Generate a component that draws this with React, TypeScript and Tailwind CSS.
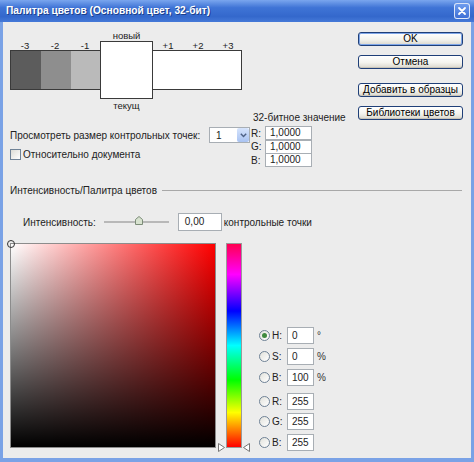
import React from 'react'

const font = "font-['Liberation_Sans','Arial',sans-serif]"

function XpButton({ label, primary = false, className = '' }: { label: string; primary?: boolean; className?: string }) {
  return (
    <div
      className={`flex h-[14px] w-[105px] items-center justify-center whitespace-nowrap rounded-[3px] border border-[#1f3f78] bg-[linear-gradient(to_bottom,#ffffff,#f3f3ee_55%,#d9d6cc)] text-[10px] leading-none text-black ${
        primary ? 'shadow-[inset_0_0_0_1px_#7ea6e8]' : 'shadow-[inset_0_-1px_0_#c8c4b8]'
      } ${className}`}
    >
      {label}
    </div>
  )
}

function Radio({ checked = false }: { checked?: boolean }) {
  return (
    <div className="flex h-[11px] w-[11px] items-center justify-center rounded-full border border-[#6f8296] bg-[linear-gradient(135deg,#e2e2dc,#ffffff)]">
      {checked && <div className="h-[5px] w-[5px] rounded-full bg-[#3f8a3f]" />}
    </div>
  )
}

function Field({ value, className = '' }: { value: string; className?: string }) {
  return (
    <div className={`flex items-center border border-[#a8aeb4] bg-white pl-[4px] text-[10px] leading-none text-[#222] ${className}`}>
      {value}
    </div>
  )
}

function ValueRow({ label, value, unit, checked, className = '' }: { label: string; value: string; unit?: string; checked?: boolean; className?: string }) {
  return (
    <div className={`flex h-[17px] items-center ${className}`}>
      <Radio checked={checked} />
      <span className="ml-[2px] w-[15px] text-[10px] text-[#222]">{label}</span>
      <Field value={value} className="h-[17px] w-[27px]" />
      {unit && <span className="ml-[3px] text-[10px] text-[#333]">{unit}</span>}
    </div>
  )
}

export default function App() {
  return (
    <div className={`flex h-[462px] w-[474px] flex-col bg-[#7aa2e6] ${font}`}>
      {/* title bar */}
      <div className="flex h-[22px] items-center bg-[linear-gradient(to_bottom,#7aa6ee,#3f74d6_35%,#3468cc_75%,#4579d8)] pl-[6px] pr-[4px]">
        <span className="whitespace-nowrap text-[10.2px] font-bold text-white [text-shadow:1px_1px_0_#1c3f8a]">
          Палитра цветов (Основной цвет, 32-бит)
        </span>
        <div className="ml-auto flex h-[16px] w-[16px] items-center justify-center rounded-[3px] border border-white/80 bg-[linear-gradient(to_bottom,#6e9cee,#3f70d6)]">
          <svg width="10" height="10" viewBox="0 0 10 10">
            <path d="M2 2 L8 8 M8 2 L2 8" stroke="white" strokeWidth="1.8" strokeLinecap="round" />
          </svg>
        </div>
      </div>

      {/* client area */}
      <div className="mx-[3px] mb-[4px] flex flex-1 flex-col whitespace-nowrap bg-[#ececec] text-[10px] text-[#222]">
        <div className="flex pt-[9px]">
          <div className="flex flex-col pl-[7px]">
            {/* swatches */}
            <div className="flex items-start">
              <div className="mt-[10px] flex flex-col">
                <div className="flex h-[9px] text-[9.5px] leading-none">
                  <span className="w-[30px] text-center">-3</span>
                  <span className="w-[30px] text-center">-2</span>
                  <span className="w-[30px] text-center">-1</span>
                </div>
                <div className="flex h-[40px] border-y border-l border-[#3a3a3a]">
                  <div className="w-[30px] bg-[#5c5c5c]" />
                  <div className="w-[30px] bg-[#8e8e8e]" />
                  <div className="w-[29px] bg-[#bababa]" />
                </div>
              </div>
              <div className="flex w-[53px] flex-col items-center">
                <span className="h-[10px] text-[9.5px] leading-none">новый</span>
                <div className="h-[58px] w-full border border-[#3a3a3a] bg-white" />
                <span className="mt-[2px] h-[9px] text-[9.5px] leading-none">текущ</span>
              </div>
              <div className="mt-[10px] flex flex-col">
                <div className="flex h-[9px] text-[9.5px] leading-none">
                  <span className="w-[30px] text-center">+1</span>
                  <span className="w-[30px] text-center">+2</span>
                  <span className="w-[30px] text-center">+3</span>
                </div>
                <div className="h-[40px] w-[89px] border-y border-r border-[#3a3a3a] bg-white" />
              </div>
            </div>

            {/* options + 32-bit values */}
            <div className="flex">
              <div className="flex w-[240px] flex-col pt-[17px]">
                <div className="flex h-[16px] items-center">
                  <span>Просмотреть размер контрольных точек:</span>
                  <div className="ml-auto flex h-[16px] w-[41px] items-center border border-[#a8aeb4] bg-white">
                    <span className="pl-[6px]">1</span>
                    <div className="ml-auto flex h-[14px] w-[12px] items-center justify-center rounded-[2px] bg-[linear-gradient(to_bottom,#d6e4fc,#a9c3f2)]">
                      <svg width="7" height="5" viewBox="0 0 7 5">
                        <path d="M0.8 0.8 L3.5 3.6 L6.2 0.8" fill="none" stroke="#4d6185" strokeWidth="1.4" />
                      </svg>
                    </div>
                  </div>
                </div>
                <div className="mt-[5px] flex h-[12px] items-center">
                  <div className="h-[11px] w-[11px] border border-[#6f8296] bg-[linear-gradient(135deg,#dcdcd6,#ffffff)]" />
                  <span className="ml-[2px]">Относительно документа</span>
                </div>
              </div>
              <div className="ml-[1px] flex flex-col">
                <span className="h-[16px] pl-[2px] pt-[1px] leading-[14px]">32-битное значение</span>
                {['R:', 'G:', 'B:'].map((l, i) => (
                  <div key={l} className={`flex h-[14px] items-center ${i > 0 ? 'mt-[-0.5px]' : ''}`}>
                    <span className="w-[14px]">{l}</span>
                    <Field value="1,0000" className="h-[14px] w-[47px]" />
                  </div>
                ))}
              </div>
            </div>
          </div>

          {/* buttons */}
          <div className="ml-auto mr-[8px] mt-[1px] flex flex-col">
            <XpButton label="OK" primary />
            <XpButton label="Отмена" className="mt-[9px]" />
            <XpButton label="Добавить в образцы" className="mt-[14px]" />
            <XpButton label="Библиотеки цветов" className="mt-[9px]" />
          </div>
        </div>

        {/* section header */}
        <div className="mt-[16px] flex h-[14px] items-center pl-[7px] pr-[9px]">
          <span>Интенсивность/Палитра цветов</span>
          <div className="ml-[5px] h-px flex-1 bg-[#a8a8a8]" />
        </div>

        {/* intensity */}
        <div className="mt-[16px] flex h-[18px] items-center pl-[20px]">
          <span>Интенсивность:</span>
          <div className="ml-[8px] flex w-[65px] items-center">
            <div className="h-[2px] w-[31px] bg-[#b8b8b8]" />
            <svg width="8" height="9" viewBox="0 0 8 9" className="mb-[3px]">
              <path d="M0.5 8.5 V3.5 L4 0.5 L7.5 3.5 V8.5 Z" fill="#d7e2cf" stroke="#7c8c78" />
            </svg>
            <div className="h-[2px] flex-1 bg-[#b8b8b8]" />
          </div>
          <Field value="0,00" className="ml-[9px] h-[18px] w-[44px] pl-[6px]" />
          <span className="ml-[2px]">контрольные точки</span>
        </div>

        {/* color field, hue bar and values */}
        <div className="mt-[12px] flex items-end pl-[7px]">
          <div className="relative mb-[3px] h-[205px] w-[206px] border border-[#8c8c8c] bg-[linear-gradient(to_right,#ffffff,#ff0000)]">
            <div className="h-full w-full bg-[linear-gradient(to_top,#000000,rgba(0,0,0,0))]" />
            <div className="absolute left-[-4px] top-[-4px] h-[8px] w-[8px] rounded-full border border-[#333]" />
          </div>
          <div className="relative mb-[3px] ml-[10px] h-[205px] w-[16px] border border-[#9a9a9a] bg-[linear-gradient(to_bottom,#ff0050,#ff00ff_15%,#0000ff_33%,#00ffff_50%,#00ff00_67%,#ffff00_83%,#ff0000)]">
            <svg width="7" height="9" viewBox="0 0 7 9" className="absolute bottom-[-5px] left-[-9px]">
              <path d="M0.5 0.5 L6.5 4.5 L0.5 8.5 Z" fill="white" stroke="#777" />
            </svg>
            <svg width="7" height="9" viewBox="0 0 7 9" className="absolute bottom-[-5px] right-[-9px]">
              <path d="M6.5 0.5 L0.5 4.5 L6.5 8.5 Z" fill="white" stroke="#777" />
            </svg>
          </div>
          <div className="ml-[17px] flex flex-col">
            <ValueRow label="H:" value="0" unit="°" checked />
            <ValueRow label="S:" value="0" unit="%" className="mt-[4px]" />
            <ValueRow label="B:" value="100" unit="%" className="mt-[4px]" />
            <ValueRow label="R:" value="255" className="mt-[7px]" />
            <ValueRow label="G:" value="255" className="mt-[3px]" />
            <ValueRow label="B:" value="255" className="mt-[4px]" />
          </div>
        </div>
      </div>
    </div>
  )
}
